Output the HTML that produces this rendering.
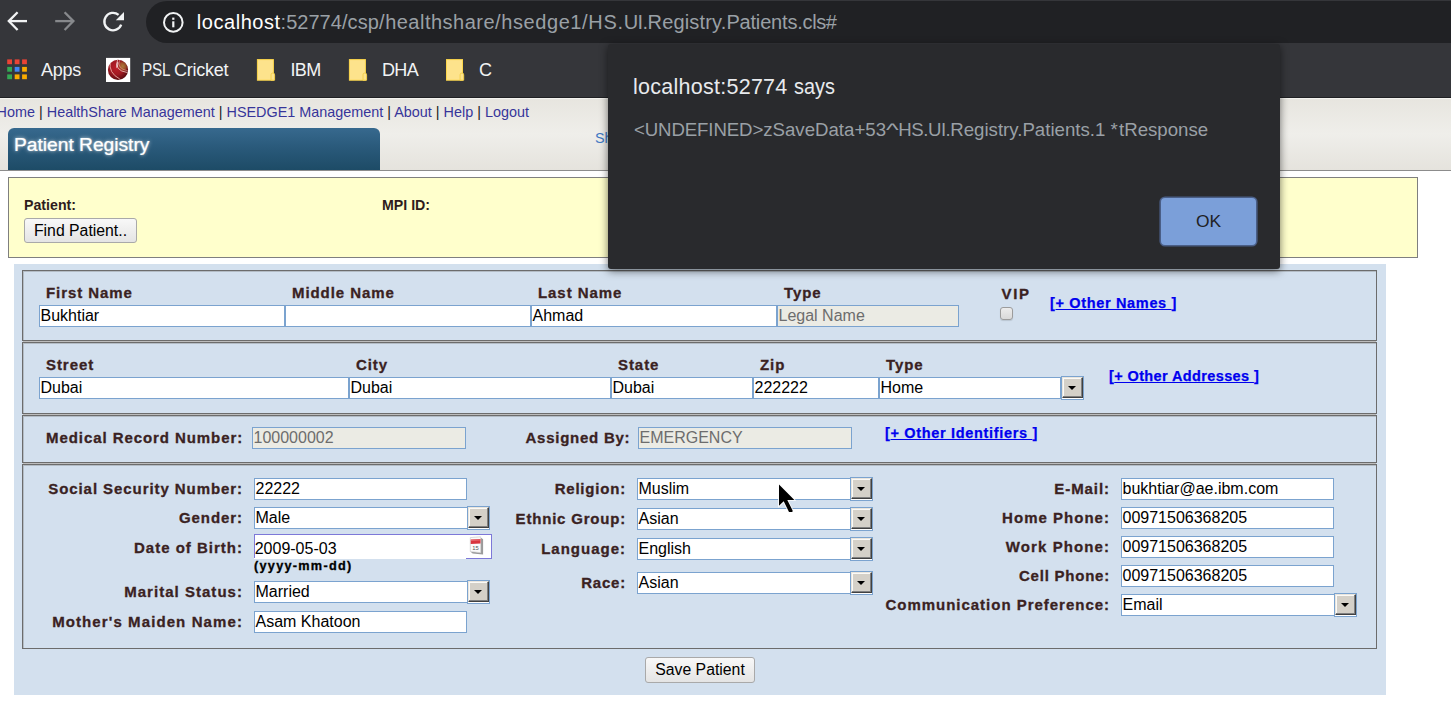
<!DOCTYPE html>
<html>
<head>
<meta charset="utf-8">
<title>Patient Registry</title>
<style>
html,body{margin:0;padding:0;}
body{width:1451px;height:709px;overflow:hidden;background:#fff;position:relative;font-family:"Liberation Sans",sans-serif;}
.abs{position:absolute;white-space:nowrap;}
/* ---------- browser chrome ---------- */
#chrome{left:0;top:0;width:1451px;height:98px;background:#35363a;box-shadow:inset 0 -1px 0 #1f2023;}
#pill{left:146px;top:1px;width:1340px;height:41.5px;background:#202124;border-radius:21px;}
.url{left:196.8px;top:10px;font-size:20px;line-height:24px;color:#9aa0a6;}
.url b{font-weight:normal;color:#fff;}
.bm{top:58px;font-size:18px;line-height:24px;color:#f1f3f4;}
/* ---------- page ---------- */
#hdr{left:0;top:98px;width:1451px;height:72px;background:linear-gradient(#e7e5df 0%,#efeeea 50%,#e5e3dd 100%);box-shadow:inset 0 1px 0 #f3f2ee;}
#hdrline{left:0;top:170px;width:1451px;height:1px;background:#8c8c8c;}
.nav{left:-3.4px;top:103px;font-size:14.4px;line-height:18px;color:#222;}
.nav a{color:#37359a;text-decoration:none;}
#tab{left:8px;top:128px;width:372px;height:42px;border-radius:6px 6px 0 0;background:linear-gradient(#37698e 0%,#2a5a7b 45%,#1d4b66 100%);}
#tabtxt{left:14px;top:133px;font-size:19.2px;line-height:24px;color:#fff;-webkit-text-stroke:0.2px #fff;text-shadow:0 0 4px rgba(255,255,255,.7),0 0 2px rgba(255,255,255,.4);}
#ybox{left:8px;top:177px;width:1408px;height:79px;background:#ffffcc;border:1px solid #7f7f7f;}
.ylab{font-size:14.2px;font-weight:bold;color:#2e1c1c;line-height:16px;}
.btn{box-sizing:border-box;border:1px solid #a9a9a9;border-radius:3px;background:linear-gradient(#f8f8f8,#e4e4e4);color:#000;font-size:15.8px;text-align:center;}
/* ---------- form ---------- */
#panel{left:14px;top:264px;width:1372px;height:431px;background:#d3e0ee;}
.box{box-sizing:border-box;border:1px solid #6c6c6c;box-shadow:inset 1px 1px 0 rgba(120,120,120,.35);}
.lab{font-size:15px;font-weight:bold;color:#3a2222;-webkit-text-stroke:0.3px #3a2222;letter-spacing:0.93px;line-height:18px;}
.rlab{text-align:right;}
.inp{box-sizing:border-box;height:22px;border:1px solid #7ba3cf;background:#fff;font-size:16px;line-height:20px;color:#000;padding-left:0.5px;overflow:hidden;}
.dis{background:#ebebe4;color:#6d6d6d;}
.lnk{font-size:14.5px;-webkit-text-stroke:0.25px #0000ee;font-weight:bold;color:#0000ee;line-height:18px;}
.lnk u{text-decoration:underline;}
.sep{left:23px;width:1353px;height:1px;background:#bcbcbc;}
.chk{box-sizing:border-box;width:13px;height:13px;border:1px solid #9c9c9c;border-radius:3px;background:linear-gradient(#ececec,#d9d9d9);box-shadow:0 1px 1px rgba(0,0,0,.12);}
.dd{box-sizing:border-box;width:23px;height:24px;border:1px solid #7ba3cf;background:#fff;}
.dd i{position:absolute;left:0;top:0;box-sizing:border-box;width:21px;height:21px;background:#d4d0c8;border:1px solid;border-color:#e9e5dd #404040 #404040 #e9e5dd;box-shadow:inset -1px -1px 0 #808080,inset 1px 1px 0 #fbfaf7;}
.dd i:after{content:"";position:absolute;left:5px;top:8px;border:4px solid transparent;border-top:4px solid #000;border-bottom:0;}
/* ---------- dialog ---------- */
#dlg{left:608.2px;top:43.8px;width:671.8px;height:225.2px;background:#292a2d;border-radius:3px;box-shadow:0 2px 8px rgba(0,0,0,.55);}
#dlgt{left:633px;top:74px;font-size:21.5px;line-height:26px;color:#e8eaed;}
#dlgm{left:634px;top:119px;font-size:18.65px;line-height:22px;color:#9aa0a6;}
#ok{left:1161px;top:198px;width:95px;height:47px;background:#7b9fd9;border-radius:4px;box-shadow:0 0 0 1.6px #4a5e86;color:#202124;font-size:17.4px;line-height:47px;text-align:center;}
</style>
</head>
<body>
<!-- browser chrome -->
<div id="chrome" class="abs"></div>
<div id="pill" class="abs"></div>
<div class="abs url"><b style="letter-spacing:0.54px">localhost</b><span style="letter-spacing:0.02px">:52774</span><span style="letter-spacing:0.13px">/csp</span><span style="letter-spacing:0.485px">/healthshare</span><span style="letter-spacing:0.6px">/hsedge1</span><span style="letter-spacing:0.67px">/HS.</span><span style="letter-spacing:-0.55px">UI.</span><span style="letter-spacing:0.15px">Registry.</span><span style="letter-spacing:-0.18px">Patients.</span><span style="letter-spacing:-0.45px">cls#</span></div>
<!-- nav icons -->
<svg class="abs" style="left:0;top:0;" width="200" height="44" viewBox="0 0 200 44" fill="none" stroke-linecap="butt" stroke-linejoin="miter">
 <path d="M17.6 12.2 L8.8 21.1 L17.6 30" stroke="#f1f3f4" stroke-width="2.3"/><path d="M8.8 21.1 H27" stroke="#f1f3f4" stroke-width="2.3"/>
 <path d="M64.6 12.2 L73.4 21.1 L64.6 30" stroke="#87898c" stroke-width="2.3"/><path d="M55.2 21.1 H73.4" stroke="#87898c" stroke-width="2.3"/>
 <path d="M121.2 24.6 A8.7 8.7 0 1 1 118.6 14.9" stroke="#f1f3f4" stroke-width="2.3"/>
 <path d="M124 12.1 V20.3 H115.8 Z" fill="#f1f3f4"/>
 <circle cx="173.3" cy="22.4" r="9.3" stroke="#f1f3f4" stroke-width="2"/>
 <rect x="172.2" y="17.6" width="2.2" height="2.2" fill="#f1f3f4"/><rect x="172.2" y="21.3" width="2.2" height="6" fill="#f1f3f4"/>
</svg>
<!-- bookmarks -->
<svg class="abs" style="left:0;top:56px;" width="500" height="28" viewBox="0 0 500 28">
 <g>
  <rect x="7.2" y="3.4" width="4.8" height="4.8" fill="#ea4335"/><rect x="14.7" y="3.4" width="4.8" height="4.8" fill="#ea4335"/><rect x="22.1" y="3.4" width="4.8" height="4.8" fill="#ea4335"/>
  <rect x="7.2" y="10.9" width="4.8" height="4.8" fill="#34a853"/><rect x="14.7" y="10.9" width="4.8" height="4.8" fill="#4285f4"/><rect x="22.1" y="10.9" width="4.8" height="4.8" fill="#f9ab00"/>
  <rect x="7.2" y="18.4" width="4.8" height="4.8" fill="#34a853"/><rect x="14.7" y="18.4" width="4.8" height="4.8" fill="#f9ab00"/><rect x="22.1" y="18.4" width="4.8" height="4.8" fill="#f9ab00"/>
 </g>
 <rect x="106" y="1.9" width="24.2" height="24.1" fill="#fff"/>
 <defs><radialGradient id="ball" cx="0.42" cy="0.4" r="0.62"><stop offset="0" stop-color="#bd1f2a"/><stop offset="0.55" stop-color="#a01922"/><stop offset="1" stop-color="#560a0f"/></radialGradient><radialGradient id="gp"><stop offset="0" stop-color="#a98c3e" stop-opacity=".85"/><stop offset="0.6" stop-color="#a4702f" stop-opacity=".6"/><stop offset="1" stop-color="#a03024" stop-opacity="0"/></radialGradient><clipPath id="bc"><circle cx="118" cy="13.8" r="10.1"/></clipPath></defs>
 <circle cx="118" cy="13.8" r="10.1" fill="url(#ball)"/>
 <g clip-path="url(#bc)">
  <ellipse cx="122.8" cy="10.2" rx="5.4" ry="6" fill="url(#gp)" transform="rotate(-25 122.8 10.2)"/>
  <path d="M110.3 5.5 Q108.3 17 119.8 23" stroke="#e9a9a3" stroke-width="1" fill="none" opacity=".9"/>
  <path d="M117.6 3.6 Q113.6 14.5 127.6 16.6" stroke="#f0c6c0" stroke-width=".9" fill="none" opacity=".9"/>
  <path d="M119.6 4.2 Q116.4 12.6 127.8 14.8" stroke="#e3a79a" stroke-width=".7" fill="none" opacity=".8"/>
  <ellipse cx="117.2" cy="9" rx="1" ry="3.2" fill="#fff" opacity=".55" transform="rotate(12 117.2 9)"/>
 </g>
 <g>
  <rect x="257.4" y="3.6" width="16" height="20.6" fill="#fde38c" stroke="#fdd74c" stroke-width="1"/>
  <path d="M271.0 24.2 v-5.4 a1.8 1.8 0 0 1 3.6 0 v5.4 z" fill="#fde38c" stroke="#f4d04a" stroke-width="1"/>
  <rect x="349.4" y="3.6" width="16" height="20.6" fill="#fde38c" stroke="#fdd74c" stroke-width="1"/>
  <path d="M363.0 24.2 v-5.4 a1.8 1.8 0 0 1 3.6 0 v5.4 z" fill="#fde38c" stroke="#f4d04a" stroke-width="1"/>
  <rect x="446.5" y="3.6" width="16" height="20.6" fill="#fde38c" stroke="#fdd74c" stroke-width="1"/>
  <path d="M460.1 24.2 v-5.4 a1.8 1.8 0 0 1 3.6 0 v5.4 z" fill="#fde38c" stroke="#f4d04a" stroke-width="1"/>
 </g>
</svg>
<div class="abs bm" style="left:41px;letter-spacing:-0.25px">Apps</div>
<div class="abs bm" style="left:142px;transform:scaleX(0.85);transform-origin:0 0;letter-spacing:-0.2px">PSL</div>
<div class="abs bm" style="left:174px;letter-spacing:-0.27px">Cricket</div>
<div class="abs bm" style="left:290.5px;letter-spacing:-0.67px">IBM</div>
<div class="abs bm" style="left:382px;letter-spacing:-0.67px">DHA</div>
<div class="abs bm" style="left:479px;letter-spacing:-0.67px">C</div>

<!-- page header -->
<div id="hdr" class="abs"></div>
<div id="hdrline" class="abs"></div>
<div class="abs nav"><a>Home</a> | <a>HealthShare Management</a> | <a>HSEDGE1 Management</a> | <a>About</a> | <a>Help</a> | <a>Logout</a></div>
<div id="tab" class="abs"></div>
<div id="tabtxt" class="abs">Patient Registry</div>
<div class="abs" style="left:595px;top:130px;font-size:14.4px;color:#3f78c4;">Sh</div>

<!-- yellow box -->
<div id="ybox" class="abs"></div>
<div class="abs ylab" style="left:24px;top:196.5px;">Patient:</div>
<div class="abs ylab" style="left:382px;top:196.5px;">MPI ID:</div>
<div class="abs btn" style="left:24px;top:218px;width:113px;height:25px;line-height:24px;">Find Patient..</div>

<!-- form panel -->
<div id="panel" class="abs"></div>

<!-- fieldset boxes -->
<div class="abs box" style="left:22px;top:270px;width:1355px;height:71px;"></div>
<div class="abs box" style="left:22px;top:342px;width:1355px;height:72px;"></div>
<div class="abs box" style="left:22px;top:415px;width:1355px;height:48px;"></div>
<div class="abs box" style="left:22px;top:464px;width:1355px;height:185px;"></div>
<div class="abs sep" style="top:341px;"></div>
<div class="abs sep" style="top:414px;"></div>
<div class="abs sep" style="top:463px;"></div>

<!-- row 1: names -->
<div class="abs lab" style="left:46px;top:284px;">First Name</div>
<div class="abs lab" style="left:292px;top:284px;">Middle Name</div>
<div class="abs lab" style="left:538px;top:284px;">Last Name</div>
<div class="abs lab" style="left:784px;top:284px;">Type</div>
<div class="abs lab" style="left:1001.5px;top:285px;letter-spacing:1.7px;">VIP</div>
<div class="abs inp" style="left:39px;top:305px;width:246px;">Bukhtiar</div>
<div class="abs inp" style="left:285px;top:305px;width:246px;"></div>
<div class="abs inp" style="left:531px;top:305px;width:246px;">Ahmad</div>
<div class="abs inp dis" style="left:777px;top:305px;width:182px;">Legal Name</div>
<div class="abs chk" style="left:1000px;top:307px;"></div>
<div class="abs lnk" style="left:1050px;top:294px;letter-spacing:0.66px;">[<u>+ Other Names </u>]</div>

<!-- row 2: address -->
<div class="abs lab" style="left:46px;top:356px;">Street</div>
<div class="abs lab" style="left:356px;top:356px;">City</div>
<div class="abs lab" style="left:618px;top:356px;">State</div>
<div class="abs lab" style="left:760px;top:356px;">Zip</div>
<div class="abs lab" style="left:886px;top:356px;">Type</div>
<div class="abs inp" style="left:39px;top:377px;width:310px;">Dubai</div>
<div class="abs inp" style="left:349px;top:377px;width:262px;">Dubai</div>
<div class="abs inp" style="left:611px;top:377px;width:142px;">Dubai</div>
<div class="abs inp" style="left:753px;top:377px;width:126px;">222222</div>
<div class="abs inp" style="left:879px;top:377px;width:182px;">Home</div>
<div class="abs dd" style="left:1061px;top:376px;"><i></i></div>
<div class="abs lnk" style="left:1109px;top:367px;letter-spacing:0.38px;">[<u>+ Other Addresses </u>]</div>

<!-- row 3: identifiers -->
<div class="abs lab" style="left:46px;top:429px;">Medical Record Number:</div>
<div class="abs inp dis" style="left:252px;top:427px;width:214px;">100000002</div>
<div class="abs lab" style="left:525.5px;top:429px;letter-spacing:0.75px;">Assigned By:</div>
<div class="abs inp dis" style="left:638px;top:427px;width:214px;">EMERGENCY</div>
<div class="abs lnk" style="left:885px;top:424px;letter-spacing:0.67px;">[<u>+ Other Identifiers </u>]</div>

<!-- row 4 left column -->
<div class="abs lab rlab" style="left:30px;width:213px;top:480px;">Social Security Number:</div>
<div class="abs lab rlab" style="left:30px;width:213px;top:509px;">Gender:</div>
<div class="abs lab rlab" style="left:30px;width:213px;top:539px;letter-spacing:1.0px;">Date of Birth:</div>
<div class="abs lab rlab" style="left:30px;width:213px;top:583px;letter-spacing:1.03px;">Marital Status:</div>
<div class="abs lab rlab" style="left:30px;width:213px;top:613px;letter-spacing:1.1px;">Mother's Maiden Name:</div>
<div class="abs inp" style="left:254px;top:478px;width:213px;">22222</div>
<div class="abs inp" style="left:254px;top:507px;width:214px;">Male</div>
<div class="abs dd" style="left:467px;top:506px;"><i></i></div>
<div class="abs" style="left:254px;top:535px;width:237px;height:24px;background:#fff;"></div>
<div class="abs" style="left:254px;top:534px;width:238px;height:1px;background:#7d78d8;"></div>
<div class="abs" style="left:254px;top:534px;width:1px;height:24px;background:#7d78d8;"></div>
<div class="abs" style="left:491px;top:534px;width:1px;height:25px;background:#7d78d8;"></div>
<div class="abs" style="left:466px;top:558px;width:26px;height:1px;background:#7d78d8;"></div>
<div class="abs" style="left:254.7px;top:538.5px;font-size:16px;line-height:20px;color:#000;">2009-05-03</div>
<svg class="abs" style="left:469px;top:536px;" width="16" height="20" viewBox="0 0 16 20"><path d="M11.6 1.6 L14.1 3.2 L14.1 18.4 L3.6 17.6 L1.3 15.6 L11.6 16.6 Z" fill="#9a9a9a"/><path d="M1.3 1.6 L11.7 0.8 L11.7 16.7 L1.3 15.5 Z" fill="#fbfbfb" stroke="#c4c4c4" stroke-width=".6"/><path d="M1.7 3.4 L11.5 2.9 L11.5 7.4 L1.7 7.9 Z" fill="#d9353e"/><path d="M1.7 4.4 L11.5 3.9" stroke="#ee8a8e" stroke-width=".7"/><text x="6.6" y="13.6" font-family="Liberation Sans, sans-serif" font-size="5.8" fill="#555" text-anchor="middle">15</text></svg>
<div class="abs" style="left:254px;top:558px;font-size:12.7px;font-weight:bold;letter-spacing:1.27px;-webkit-text-stroke:0.3px #000;line-height:16px;color:#000;">(yyyy-mm-dd)</div>
<div class="abs inp" style="left:254px;top:581px;width:214px;">Married</div>
<div class="abs dd" style="left:467px;top:580px;"><i></i></div>
<div class="abs inp" style="left:254px;top:611px;width:213px;">Asam Khatoon</div>

<!-- row 4 middle column -->
<div class="abs lab rlab" style="left:441px;width:185px;letter-spacing:0.8px;top:480px;">Religion:</div>
<div class="abs lab rlab" style="left:441px;width:185px;letter-spacing:0.8px;top:510px;">Ethnic Group:</div>
<div class="abs lab rlab" style="left:441px;width:185px;letter-spacing:1.0px;top:540px;">Language:</div>
<div class="abs lab rlab" style="left:441px;width:185px;letter-spacing:0.8px;top:574px;">Race:</div>
<div class="abs inp" style="left:637px;top:478px;width:214px;">Muslim</div>
<div class="abs dd" style="left:850px;top:477px;"><i></i></div>
<div class="abs inp" style="left:637px;top:508px;width:214px;">Asian</div>
<div class="abs dd" style="left:850px;top:507px;"><i></i></div>
<div class="abs inp" style="left:637px;top:538px;width:214px;">English</div>
<div class="abs dd" style="left:850px;top:537px;"><i></i></div>
<div class="abs inp" style="left:637px;top:572px;width:214px;">Asian</div>
<div class="abs dd" style="left:850px;top:571px;"><i></i></div>

<!-- row 4 right column -->
<div class="abs lab rlab" style="left:860px;width:250px;top:480px;">E-Mail:</div>
<div class="abs lab rlab" style="left:860px;width:250px;top:509px;letter-spacing:1.02px;">Home Phone:</div>
<div class="abs lab rlab" style="left:860px;width:250px;top:538px;letter-spacing:1.09px;">Work Phone:</div>
<div class="abs lab rlab" style="left:860px;width:250px;top:567px;letter-spacing:0.77px;">Cell Phone:</div>
<div class="abs lab rlab" style="left:860px;width:250px;top:596px;letter-spacing:0.98px;">Communication Preference:</div>
<div class="abs inp" style="left:1121px;top:478px;width:213px;">bukhtiar@ae.ibm.com</div>
<div class="abs inp" style="left:1121px;top:507px;width:213px;">00971506368205</div>
<div class="abs inp" style="left:1121px;top:536px;width:213px;">00971506368205</div>
<div class="abs inp" style="left:1121px;top:565px;width:213px;">00971506368205</div>
<div class="abs inp" style="left:1121px;top:594px;width:214px;">Email</div>
<div class="abs dd" style="left:1334px;top:593px;"><i></i></div>

<div class="abs btn" style="left:645px;top:657px;width:110px;height:26px;line-height:23px;">Save Patient</div>

<!-- mouse cursor -->
<svg class="abs" style="left:770px;top:480px;" width="30" height="36" viewBox="0 0 30 36"><path d="M9 4.4 L9 25.8 L13.7 21.3 L19 32 L22.4 32 L22.6 30.4 L17.3 20 L24.4 20 Z" fill="#000" stroke="#fff" stroke-width="1.6" stroke-linejoin="miter" paint-order="stroke"/></svg>



<!-- dialog -->
<div id="dlg" class="abs"></div>
<div id="dlgt" class="abs"><span style="letter-spacing:0.27px">localhost:</span><span style="letter-spacing:0.23px">52774 </span><span style="display:inline-block;transform:scaleX(0.925);transform-origin:0 0">says</span></div>
<div id="dlgm" class="abs"><span style="letter-spacing:-0.12px">&lt;UNDEFINED&gt;</span>zSaveData+53<span style="display:inline-block;transform:scaleX(1.45);transform-origin:0 0;margin-right:3.6px">^</span><span style="letter-spacing:-0.5px">HS.UI.</span>Registry.Patients.1 <span style="letter-spacing:1.2px">*</span>tResponse</div>
<div id="ok" class="abs">OK</div>
</body>
</html>
